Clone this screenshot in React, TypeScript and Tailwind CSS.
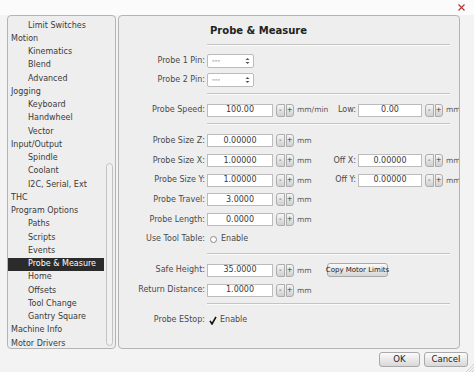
const nav: [string, boolean][] = [
  ["Limit Switches", true],
  ["Motion", false],
  ["Kinematics", true],
  ["Blend", true],
  ["Advanced", true],
  ["Jogging", false],
  ["Keyboard", true],
  ["Handwheel", true],
  ["Vector", true],
  ["Input/Output", false],
  ["Spindle", true],
  ["Coolant", true],
  ["I2C, Serial, Ext", true],
  ["THC", false],
  ["Program Options", false],
  ["Paths", true],
  ["Scripts", true],
  ["Events", true],
  ["Probe & Measure", true],
  ["Home", true],
  ["Offsets", true],
  ["Tool Change", true],
  ["Gantry Square", true],
  ["Machine Info", false],
  ["Motor Drivers", false],
];

const Separator = ({ className }: { className: string }) => (
  <div
    className={`ml-[88px] w-[243px] h-[2px] shrink-0 border-t border-[#c4c4c4] border-b border-b-[#fafafa] ${className}`}
  />
);

const Spinner = () => (
  <div className="ml-[3px] w-[18px] h-[13px] shrink-0 flex gap-px text-[7px] leading-none text-[#333]">
    <span className="flex-1 flex items-center justify-center rounded-l-[3px] border border-[#adadad] bg-gradient-to-b from-[#f6f6f6] to-[#d0d0d0]">-</span>
    <span className="flex-1 flex items-center justify-center rounded-r-[3px] border border-[#adadad] bg-gradient-to-b from-[#f6f6f6] to-[#d0d0d0]">+</span>
  </div>
);

const NumInput = ({ value, w }: { value: string; w: string }) => (
  <div
    className={`${w} h-[13px] shrink-0 bg-white border border-[#bcbcbc] flex items-center justify-center text-[8px] text-[#3a3a3a]`}
  >
    {value}
  </div>
);

const Label = ({ text, w }: { text: string; w: string }) => (
  <span className={`${w} shrink-0 text-right text-[8px] text-[#4a4a4a] whitespace-nowrap`}>{text}</span>
);

const NumRow = ({
  label,
  value,
  unit,
  h,
  extra,
}: {
  label: string;
  value: string;
  unit: string;
  h: string;
  extra?: React.ReactNode;
}) => (
  <div className={`flex items-center ${h} shrink-0`}>
    <Label text={label} w="w-[86px]" />
    <div className="ml-[2px]">
      <NumInput value={value} w="w-[66px]" />
    </div>
    <Spinner />
    <span className="ml-[3px] w-[30px] shrink-0 text-[7.5px] text-[#5a5a5a]">{unit}</span>
    {extra}
  </div>
);

const Second = ({ label, value, unit }: { label: string; value: string; unit: string }) => (
  <>
    <Label text={label} w="w-[29px]" />
    <div className="ml-[2px]">
      <NumInput value={value} w="w-[64px]" />
    </div>
    <Spinner />
    <span className="ml-[3px] shrink-0 text-[7.5px] text-[#5a5a5a] whitespace-nowrap">{unit}</span>
  </>
);

const PinSelect = ({ label }: { label: string }) => (
  <div className="flex items-center h-[19px] shrink-0">
    <Label text={label} w="w-[86px]" />
    <div className="ml-[2px] w-[47px] h-[14px] bg-white border border-[#bcbcbc] rounded-[2px] flex items-center justify-between pl-[4px] pr-[3px] text-[7.5px] text-[#555]">
      <span>---</span>
      <svg width="5" height="8" viewBox="0 0 5 8">
        <path d="M0.5 3 L2.5 1 L4.5 3 Z M0.5 5 L2.5 7 L4.5 5 Z" fill="#555" />
      </svg>
    </div>
  </div>
);

const App = () => {
  return (
    <div className="relative w-[474px] h-[372px] bg-[#f3f3f3] flex flex-col font-['DejaVu_Sans',sans-serif] overflow-hidden">
      <div className="h-[15px] shrink-0 bg-[#fbfbfb] flex justify-end items-center pr-[9px]">
        <svg width="7" height="7" viewBox="0 0 7 7">
          <path d="M0.5 0.5 L6.5 6.5 M6.5 0.5 L0.5 6.5" stroke="#b03a3a" strokeWidth="1.2" />
        </svg>
      </div>

      <div className="flex h-[334px] shrink-0 pl-[7px] gap-[2px]">
        {/* tree */}
        <div className="w-[109px] h-full rounded-[4px] border border-[#b4b4b4] bg-[#eeeeee] flex overflow-hidden">
          <div className="w-[96px] pt-[3px] flex flex-col">
            {nav.map(([name, sub]) => {
              const active = name === "Probe & Measure";
              return (
                <div
                  key={name}
                  className={`h-[13.25px] shrink-0 flex items-center text-[8px] whitespace-nowrap ${
                    sub ? "pl-[20px]" : "pl-[3px]"
                  } ${active ? "bg-[#2b2b2b] text-white" : "text-[#3a3a3a]"}`}
                >
                  {name}
                </div>
              );
            })}
          </div>
          <div className="ml-[2px] pt-[147px]">
            <div className="w-[7px] h-[183px] rounded-full border border-[#c2c2c2] bg-[#f1f1f1]" />
          </div>
        </div>

        {/* form */}
        <div className="w-[342px] h-full rounded-[4px] border border-[#b4b4b4] bg-[#eeeeee] flex flex-col overflow-hidden">
          <div className="h-[28px] shrink-0 flex items-center pl-[91px] text-[10px] font-bold text-[#222]">
            Probe &amp; Measure
          </div>
          <Separator className="" />

          <div className="mt-[5px]" />
          <PinSelect label="Probe 1 Pin:" />
          <PinSelect label="Probe 2 Pin:" />

          <Separator className="mt-[4px]" />

          <div className="mt-[5px]" />
          <NumRow
            label="Probe Speed:"
            value="100.00"
            unit="mm/min"
            h="h-[20px]"
            extra={<Second label="Low:" value="0.00" unit="mm/min" />}
          />

          <Separator className="mt-[3px]" />

          <div className="mt-[6px]" />
          <NumRow label="Probe Size Z:" value="0.00000" unit="mm" h="h-[19.7px]" />
          <NumRow
            label="Probe Size X:"
            value="1.00000"
            unit="mm"
            h="h-[19.7px]"
            extra={<Second label="Off X:" value="0.00000" unit="mm" />}
          />
          <NumRow
            label="Probe Size Y:"
            value="1.00000"
            unit="mm"
            h="h-[19.7px]"
            extra={<Second label="Off Y:" value="0.00000" unit="mm" />}
          />
          <NumRow label="Probe Travel:" value="3.0000" unit="mm" h="h-[19.7px]" />
          <NumRow label="Probe Length:" value="0.0000" unit="mm" h="h-[19.7px]" />
          <div className="flex items-center h-[19.7px] shrink-0">
            <Label text="Use Tool Table:" w="w-[86px]" />
            <span className="ml-[5px] w-[7px] h-[7px] rounded-full border border-[#8a8a8a] bg-white" />
            <span className="ml-[4px] text-[8px] text-[#4a4a4a]">Enable</span>
          </div>

          <Separator className="mt-[4px]" />

          <div className="mt-[5px]" />
          <NumRow
            label="Safe Height:"
            value="35.0000"
            unit="mm"
            h="h-[20px]"
            extra={
              <button className="w-[61px] h-[14px] shrink-0 rounded-[3px] border border-[#a9a9a9] bg-gradient-to-b from-[#fafafa] to-[#d6d6d6] text-[7px] text-[#222] whitespace-nowrap flex items-center justify-center">
                Copy Motor Limits
              </button>
            }
          />
          <NumRow label="Return Distance:" value="1.0000" unit="mm" h="h-[20px]" />

          <Separator className="mt-[3px]" />

          <div className="mt-[5px]" />
          <div className="flex items-center h-[20px] shrink-0">
            <Label text="Probe EStop:" w="w-[86px]" />
            <svg className="ml-[4px]" width="8" height="9" viewBox="0 0 8 9">
              <path d="M1 4.8 L3 8 L7 0.8" stroke="#111" strokeWidth="1.6" fill="none" />
            </svg>
            <span className="ml-[3px] text-[8px] text-[#4a4a4a]">Enable</span>
          </div>
        </div>
      </div>

      <div className="flex-1 flex justify-end items-start pt-[3px] pr-[6px] gap-[4px]">
        <button className="w-[41px] h-[15px] rounded-[3px] border border-[#a9a9a9] bg-gradient-to-b from-[#fbfbfb] to-[#d8d8d8] text-[8.5px] text-[#222] flex items-center justify-center">
          OK
        </button>
        <button className="w-[44px] h-[15px] rounded-[3px] border border-[#a9a9a9] bg-gradient-to-b from-[#fbfbfb] to-[#d8d8d8] text-[8.5px] text-[#222] flex items-center justify-center">
          Cancel
        </button>
      </div>

      <svg className="absolute right-0 bottom-0" width="10" height="10" viewBox="0 0 10 10">
        <path d="M10 2 L2 10 M10 5 L5 10 M10 8 L8 10" stroke="#c6c6c6" strokeWidth="0.8" />
      </svg>
    </div>
  );
};

export default App;
